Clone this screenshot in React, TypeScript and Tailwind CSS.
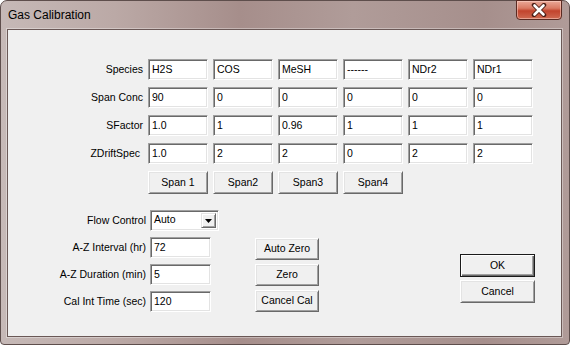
import React from 'react';

const font = { fontFamily: '"Liberation Sans", Arial, sans-serif' };

// classic sunken edit box
function Field({ value, w = 'w-[60px]' }: { value: string; w?: string }) {
  return (
    <div
      className={`${w} h-[21px] bg-white border border-t-[#a0a0a0] border-l-[#a0a0a0] border-b-white border-r-white shadow-[inset_1px_1px_0_#696969,inset_-1px_-1px_0_#e3e3e3] pl-[3px] pt-[3px] text-[10.5px] leading-[13px] text-black whitespace-nowrap overflow-hidden`}
    >
      {value}
    </div>
  );
}

function Btn({ label, w, h = 'h-[23px]', def = false }: { label: string; w: string; h?: string; def?: boolean }) {
  return (
    <div
      className={`${w} ${h} flex items-center justify-center bg-[#f0f0f0] text-[10.5px] text-black border ${
        def
          ? 'border-[#1a1a1a] shadow-[inset_1px_1px_0_#ffffff,inset_-1px_-1px_0_#696969,inset_-2px_-2px_0_#a0a0a0]'
          : 'border-t-white border-l-white border-b-[#696969] border-r-[#696969] shadow-[inset_1px_1px_0_#e3e3e3,inset_-1px_-1px_0_#a0a0a0]'
      }`}
    >
      {label}
    </div>
  );
}

const rows: { label: string; values: string[] }[] = [
  { label: 'Species', values: ['H2S', 'COS', 'MeSH', '------', 'NDr2', 'NDr1'] },
  { label: 'Span Conc', values: ['90', '0', '0', '0', '0', '0'] },
  { label: 'SFactor', values: ['1.0', '1', '0.96', '1', '1', '1'] },
  { label: 'ZDriftSpec', values: ['1.0', '2', '2', '0', '2', '2'] },
];

export default function App() {
  return (
    <div
      className="w-[570px] h-[345px] flex flex-col rounded-t-[7px] rounded-b-[4px] border border-[#5e4e4c] bg-[linear-gradient(90deg,#c6b9b7_0%,#bba9a6_20%,#a68e8b_42%,#b09c99_62%,#a68f8c_85%,#b09b98_100%)]"
      style={font}
    >
      {/* title bar */}
      <div className="h-[28px] flex items-start justify-between">
        <div className="pl-[7px] pt-[7px] text-[12px] leading-[14px] text-black">Gas Calibration</div>
        <div className="mr-[7px] -mt-px w-[46px] h-[20px] rounded-b-[4px] border border-[#5a2a22] bg-[linear-gradient(180deg,#eaa898_0%,#d97a64_40%,#c2442d_55%,#cf6a52_100%)] flex items-center justify-center shadow-[inset_0_0_0_1px_rgba(255,220,210,0.5)]">
          <svg width="16" height="14" viewBox="0 0 16 14">
            <path d="M3 2 L13 12 M13 2 L3 12" stroke="#4a1c14" strokeWidth="4.5" strokeLinecap="round" />
            <path d="M3.5 2.5 L12.5 11.5 M12.5 2.5 L3.5 11.5" stroke="#ffffff" strokeWidth="2.6" strokeLinecap="round" />
          </svg>
        </div>
      </div>

      {/* client area */}
      <div className="flex-1 pl-[6px] pr-[7px] pb-[7px] flex">
        <div className="flex-1 bg-[#f0f0f0] border border-[#6a5856] shadow-[0_0_0_1px_rgba(255,255,255,0.35)]">
          <div className="pt-[29px] grid grid-cols-[135px_repeat(6,60px)] gap-x-[5px] gap-y-[7px] items-center">
            {rows.map((r) => (
              <React.Fragment key={r.label}>
                <div className={`text-right text-[10.5px] text-black whitespace-nowrap ${r.label === 'ZDriftSpec' ? 'pr-[3px]' : ''}`}>
                  {r.label}
                </div>
                {r.values.map((v, i) => (
                  <Field key={i} value={v} />
                ))}
              </React.Fragment>
            ))}
            <div />
            <Btn label="Span 1" w="w-[60px]" />
            <Btn label="Span2" w="w-[60px]" />
            <Btn label="Span3" w="w-[60px]" />
            <Btn label="Span4" w="w-[60px]" />
          </div>

          <div className="mt-[16px] flex items-start">
            <div className="grid grid-cols-[138px_69px] gap-x-[4px] gap-y-[6px] items-center">
              <div className="text-right text-[10.5px] text-black whitespace-nowrap">Flow Control</div>
              <div className="w-[69px] h-[21px] bg-white border border-t-[#a0a0a0] border-l-[#a0a0a0] border-b-white border-r-white shadow-[inset_1px_1px_0_#696969,inset_-1px_-1px_0_#e3e3e3] flex items-start pl-[2px] pt-[2px] pr-[2px]">
                <div className="flex-1 text-[10.5px] leading-[13px] pl-px">Auto</div>
                <div className="w-[15px] h-[15px] bg-[#f0f0f0] border border-t-[#e3e3e3] border-l-[#e3e3e3] border-b-[#696969] border-r-[#696969] shadow-[inset_1px_1px_0_#ffffff,inset_-1px_-1px_0_#a0a0a0] flex items-center justify-center">
                  <svg width="7" height="4" viewBox="0 0 7 4">
                    <path d="M0 0 H7 L3.5 4 Z" fill="#000" />
                  </svg>
                </div>
              </div>
              <div className="text-right text-[10.5px] text-black whitespace-nowrap">A-Z Interval (hr)</div>
              <Field value="72" w="w-[61px]" />
              <div className="text-right text-[10.5px] text-black whitespace-nowrap">A-Z Duration (min)</div>
              <Field value="5" w="w-[61px]" />
              <div className="text-right text-[10.5px] text-black whitespace-nowrap">Cal Int Time (sec)</div>
              <Field value="120" w="w-[61px]" />
            </div>

            <div className="ml-[36px] mt-[28px] flex flex-col gap-[4px]">
              <Btn label="Auto Zero" w="w-[64px]" h="h-[22px]" />
              <Btn label="Zero" w="w-[64px]" h="h-[22px]" />
              <Btn label="Cancel Cal" w="w-[64px]" h="h-[22px]" />
            </div>

            <div className="ml-[141px] mt-[44px] flex flex-col gap-[3px]">
              <Btn label="OK" w="w-[75px]" def />
              <Btn label="Cancel" w="w-[75px]" />
            </div>
          </div>
        </div>
      </div>
    </div>
  );
}
